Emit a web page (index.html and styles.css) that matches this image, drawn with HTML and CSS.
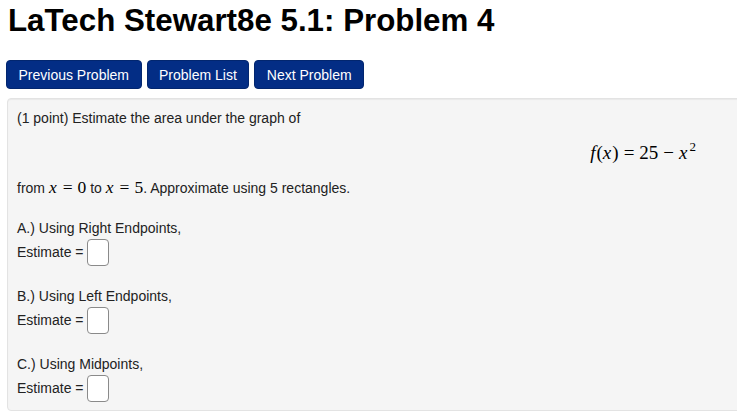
FILE: index.html
```html
<!DOCTYPE html>
<html lang="en">
<head>
    <meta charset="UTF-8" />
    <title>LaTech Stewart8e 5.1: Problem 4</title>
    <link rel="stylesheet" href="styles.css">
</head>
<body>

    <h1 class="title">LaTech Stewart8e 5.1: Problem 4</h1>

    <!-- Navegación entre problemas -->
    <div class="nav">
        <button class="nav-btn">Previous Problem</button>
        <button class="nav-btn">Problem List</button>
        <button class="nav-btn">Next Problem</button>
    </div>

    <!-- Enunciado del problema -->
    <div class="problem">
        <div class="line">(1 point) Estimate the area under the graph of</div>

        <div class="display">
            <span class="math big"><i>f</i>(<i>x</i>)<span class="op">=</span>25<span class="op">&minus;</span><i>x</i><sup>2</sup></span>
        </div>

        <div class="line">from <span class="math"><i>x</i><span class="op">=</span>0</span> to <span class="math"><i>x</i><span class="op">=</span>5</span>. Approximate using 5 rectangles.</div>

        <div class="part">
            <div class="line">A.) Using Right Endpoints,</div>
            <div class="answer">Estimate = <input type="text" class="ans" /></div>
        </div>

        <div class="part">
            <div class="line">B.) Using Left Endpoints,</div>
            <div class="answer">Estimate = <input type="text" class="ans" /></div>
        </div>

        <div class="part">
            <div class="line">C.) Using Midpoints,</div>
            <div class="answer">Estimate = <input type="text" class="ans" /></div>
        </div>
    </div>

</body>
</html>
```

FILE: styles.css
```css
body {
    font-family: "Liberation Sans", Arial, sans-serif;
    font-size: 14px;
    color: #222;
    margin: 0;
    padding: 0 0 0 7px;
    overflow: hidden;
}
.title {
    font-size: 31.3px;
    font-weight: bold;
    color: #000;
    margin: 0;
    padding: 3px 0 0 1px;
    line-height: 36px;
}
.nav {
    display: flex;
    gap: 5px;
    margin: 21px 0 0 -1px;
}
.nav-btn {
    font-family: "Liberation Sans", Arial, sans-serif;
    font-size: 14px;
    color: #fff;
    background-color: #032d85;
    border: 1px solid #02266f;
    border-radius: 4px;
    height: 29px;
    padding: 0 11.5px;
    cursor: pointer;
}
.problem {
    margin-top: 9px;
    margin-right: -20px;
    background-color: #f5f5f5;
    border: 1px solid #e3e3e3;
    border-radius: 4px;
    box-shadow: inset 0 1px 1px rgba(0, 0, 0, 0.05);
    padding: 9px 9px 16px 9px;
    height: 286px;
}
.line {
    line-height: 20px;
}
.display {
    margin: 14px 0;
    height: 21px;
    line-height: 21px;
    text-align: right;
    padding-right: 51px;
}
.math {
    font-family: "Liberation Serif", "Times New Roman", serif;
    font-size: 17.5px;
    color: #000;
}
.math.big {
    font-size: 19px;
}
.math i {
    font-style: italic;
    margin-right: 1px;
}
.math .op {
    margin: 0 5px;
}
.math sup {
    font-size: 13px;
    vertical-align: 8px;
    line-height: 0;
    margin-left: 1px;
}
.part {
    margin-top: 20px;
}
.answer {
    display: flex;
    align-items: center;
    gap: 3px;
    height: 28px;
}
.ans {
    width: 22px;
    height: 27px;
    box-sizing: border-box;
    border: 1px solid #8a8a8a;
    border-radius: 4px;
    background: #fff;
    margin: 0;
    padding: 0;
}
```
